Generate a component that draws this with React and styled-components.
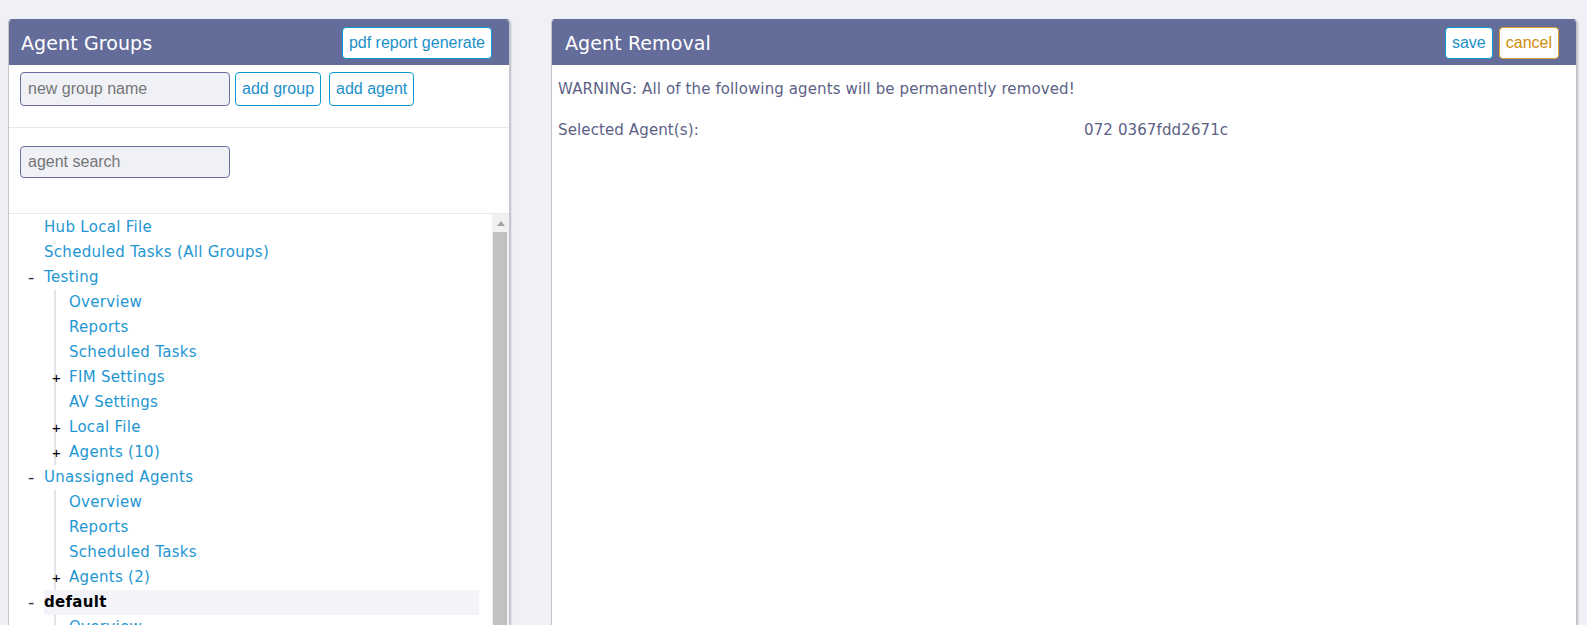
import React from "react";
import styled, { createGlobalStyle } from "styled-components";

const Global = createGlobalStyle`
  html, body { margin: 0; padding: 0; background: #f0f1f7; overflow: hidden; }
  * { box-sizing: border-box; }
`;

const SANS = `"DejaVu Sans", "Open Sans", sans-serif`;
const ARIAL = `"Liberation Sans", Arial, sans-serif`;

const Page = styled.div`
  display: flex;
  gap: 41px;
  padding: 19px 10px 0 8px;
  height: 100vh;
  overflow: hidden;
  background: #f0f1f7;
`;

const Panel = styled.section`
  flex: ${(p) => (p.$width ? `0 0 ${p.$width}px` : "1 1 auto")};
  height: 720px;
  display: flex;
  flex-direction: column;
  background: #fff;
  border: 1px solid #c4c5cc;
  border-top-color: #646c9a;
  border-radius: 4px 4px 0 0;
  box-shadow: 1px 1px 2px rgba(0, 0, 0, 0.22);
  overflow: hidden;
`;

const Header = styled.header`
  flex: 0 0 45px;
  display: flex;
  align-items: center;
  justify-content: space-between;
  padding: 0 17px 0 ${(p) => p.$pl || 12}px;
  background: #646c9a;
`;

const Title = styled.h2`
  margin: 0;
  font-family: ${SANS};
  font-weight: 400;
  font-size: 19px;
  letter-spacing: 0.1px;
  color: #fff;
`;

const ButtonGroup = styled.div`
  display: flex;
  gap: 6px;
`;

const Button = styled.button`
  height: ${(p) => p.$h || 32}px;
  padding: 0 6px;
  margin-left: ${(p) => p.$ml || 0}px;
  background: #fff;
  border: 1px solid ${(p) => (p.$warn ? "#d9a02a" : "#0b9ad4")};
  border-radius: 4px;
  color: ${(p) => (p.$warn ? "#d08d0c" : "#1b90c8")};
  font-family: ${ARIAL};
  font-size: 16px;
  cursor: pointer;
`;

const Section = styled.div`
  display: flex;
  align-items: center;
  padding: ${(p) => p.$pad};
  border-bottom: 1px solid #e8e9ee;
`;

const Input = styled.input`
  width: 210px;
  height: ${(p) => p.$h || 34}px;
  padding: 0 7px;
  background: #f0f1f7;
  border: 1px solid #6a6f9c;
  border-radius: 4px;
  font-family: ${ARIAL};
  font-size: 16px;
  color: #333;
  outline: none;
  &::placeholder { color: #757575; }
`;

const TreeWrap = styled.div`
  flex: 1 1 auto;
  display: flex;
  min-height: 0;
`;

const TreeList = styled.ul`
  flex: 1 1 auto;
  list-style: none;
  margin: 0;
  padding: 1px 0 0;
  overflow: hidden;
  font-family: ${SANS};
  font-size: 15px;
  letter-spacing: 0.3px;
`;

const ScrollTrack = styled.div`
  flex: 0 0 17px;
  display: flex;
  flex-direction: column;
  background: #f1f1f1;
`;

const ScrollArrow = styled.div`
  flex: 0 0 18px;
  display: flex;
  align-items: center;
  justify-content: center;
`;

const ScrollThumb = styled.div`
  height: ${(p) => p.$h}px;
  margin: 0 2px 0 1px;
  background: #c1c1c1;
`;

const SubList = styled.ul`
  list-style: none;
  margin: 0 0 0 45px;
  padding: 0 0 0 13px;
  border-left: 2px solid #e4e4e8;
`;

const Item = styled.li`
  position: relative;
`;

const Label = styled.a`
  display: block;
  height: 25px;
  line-height: 25px;
  margin: 0 13px 0 ${(p) => (p.$top ? 35 : 0)}px;
  color: ${(p) => (p.$selected ? "#000" : "#1e96d2")};
  font-weight: ${(p) => (p.$selected ? 600 : 400)};
  background: ${(p) => (p.$selected ? "#f3f4f9" : "transparent")};
  white-space: nowrap;
  text-decoration: none;
  cursor: pointer;
`;

const Toggle = styled.span`
  position: absolute;
  top: 0;
  left: ${(p) => p.$left}px;
  height: 25px;
  line-height: 25px;
  font-family: ${ARIAL};
  font-size: ${(p) => (p.$plus ? 15 : 19)}px;
  color: ${(p) => (p.$plus ? "#000" : "#3a3a3a")};
`;

const Body = styled.div`
  padding: 13px 6px;
  font-family: ${SANS};
  font-size: 15px;
  letter-spacing: 0.12px;
  color: #5c6286;
  line-height: 22px;
`;

const Row = styled.div`
  display: grid;
  grid-template-columns: 526px 1fr;
  margin-top: ${(p) => p.$mt || 0}px;
`;

const groups = [
  {
    name: "Testing",
    items: [
      ["Overview"], ["Reports"], ["Scheduled Tasks"], ["FIM Settings", true],
      ["AV Settings"], ["Local File", true], ["Agents (10)", true],
    ],
  },
  {
    name: "Unassigned Agents",
    items: [["Overview"], ["Reports"], ["Scheduled Tasks"], ["Agents (2)", true]],
  },
  {
    name: "default",
    selected: true,
    items: [
      ["Overview"], ["Reports"], ["Scheduled Tasks"], ["FIM Settings", true],
      ["AV Settings"], ["Local File", true], ["Agents (1)", true],
    ],
  },
];

export default function App() {
  return (
    <>
      <Global />
      <Page>
        <Panel $width={502}>
          <Header>
            <Title>Agent Groups</Title>
            <Button>pdf report generate</Button>
          </Header>
          <Section $pad="7px 0 21px 11px">
            <Input placeholder="new group name" />
            <Button $h={34} $ml={5}>add group</Button>
            <Button $h={34} $ml={8}>add agent</Button>
          </Section>
          <Section $pad="18px 0 35px 11px">
            <Input $h={32} placeholder="agent search" />
          </Section>
          <TreeWrap>
            <TreeList>
              <Item><Label $top>Hub Local File</Label></Item>
              <Item><Label $top>Scheduled Tasks (All Groups)</Label></Item>
              {groups.map((g) => (
                <Item key={g.name}>
                  <Toggle $left={19}>-</Toggle>
                  <Label $top $selected={g.selected}>{g.name}</Label>
                  <SubList>
                    {g.items.map(([label, plus]) => (
                      <Item key={label}>
                        {plus && <Toggle $plus $left={-17}>+</Toggle>}
                        <Label>{label}</Label>
                      </Item>
                    ))}
                  </SubList>
                </Item>
              ))}
            </TreeList>
            <ScrollTrack>
              <ScrollArrow>
                <svg width="8" height="5" viewBox="0 0 8 5">
                  <path d="M0 5 L4 0 L8 5Z" fill="#a3a3a3" />
                </svg>
              </ScrollArrow>
              <ScrollThumb $h={460} />
            </ScrollTrack>
          </TreeWrap>
        </Panel>
        <Panel>
          <Header $pl={13}>
            <Title>Agent Removal</Title>
            <ButtonGroup>
              <Button>save</Button>
              <Button $warn>cancel</Button>
            </ButtonGroup>
          </Header>
          <Body>
            <div>WARNING: All of the following agents will be permanently removed!</div>
            <Row $mt={19}>
              <span>Selected Agent(s):</span>
              <span>072 0367fdd2671c</span>
            </Row>
          </Body>
        </Panel>
      </Page>
    </>
  );
}
